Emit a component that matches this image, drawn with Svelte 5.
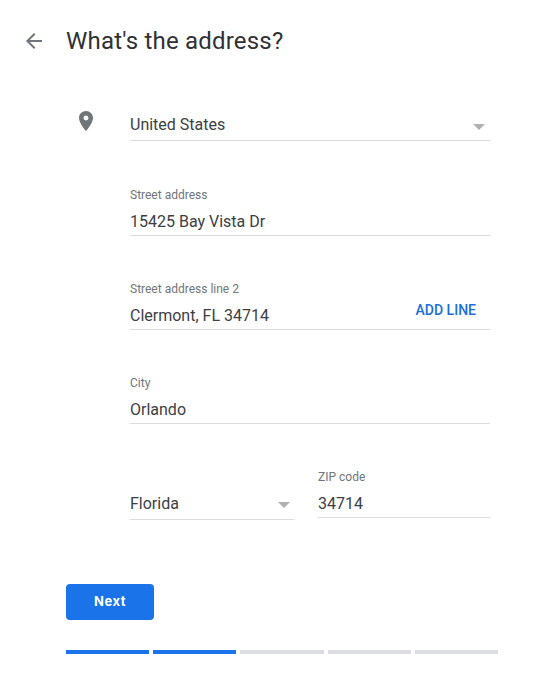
<script>
  const steps = [true, true, false, false, false]
</script>

<main class="page">
  <header class="head">
    <svg class="back" viewBox="0 0 24 24" width="24" height="24">
      <path d="M20 11H7.83l5.59-5.59L12 4l-8 8 8 8 1.41-1.41L7.83 13H20v-2z" />
    </svg>
    <h1>What's the address?</h1>
  </header>

  <form class="form">
    <svg class="pin" viewBox="0 0 24 24" width="24" height="24">
      <path d="M12 2C8.13 2 5 5.13 5 9c0 5.25 7 13 7 13s7-7.75 7-13c0-3.87-3.13-7-7-7zm0 9.5a2.5 2.5 0 0 1 0-5 2.5 2.5 0 0 1 0 5z" />
    </svg>

    <div class="fields">
      <div class="field select country">
        <span class="value">United States</span>
        <span class="caret"></span>
      </div>

      <div class="field">
        <span class="label">Street address</span>
        <span class="value">15425 Bay Vista Dr</span>
      </div>

      <div class="field">
        <span class="label">Street address line 2</span>
        <div class="line2">
          <span class="value">Clermont, FL 34714</span>
          <span class="add">ADD LINE</span>
        </div>
      </div>

      <div class="field">
        <span class="label">City</span>
        <span class="value">Orlando</span>
      </div>

      <div class="split">
        <div class="field select state">
          <span class="value">Florida</span>
          <span class="caret"></span>
        </div>
        <div class="field zip">
          <span class="label">ZIP code</span>
          <span class="value">34714</span>
        </div>
      </div>
    </div>
  </form>

  <button class="next" type="button">Next</button>

  <div class="progress">
    {#each steps as done}
      <span class="step" class:done></span>
    {/each}
  </div>
</main>

<style>
  :global(body) {
    margin: 0;
    background: #fff;
  }

  .page {
    width: 546px;
    height: 682px;
    box-sizing: border-box;
    padding: 25px 48px 0 22px;
    font-family: Roboto, "Liberation Sans", sans-serif;
    color: #3c4043;
    overflow: hidden;
  }

  .head {
    display: flex;
    align-items: center;
    gap: 20px;
    height: 32px;
  }

  .back {
    fill: #70757a;
    flex: none;
  }

  h1 {
    margin: 0;
    font-size: 24px;
    font-weight: 400;
    line-height: 32px;
    letter-spacing: 0.2px;
    color: #303134;
  }

  .form {
    display: flex;
    margin: 52px 0 0 44px;
  }

  .pin {
    fill: #70757a;
    flex: none;
    margin: 0 32px 0 8px;
  }

  .fields {
    width: 360px;
    display: flex;
    flex-direction: column;
  }

  .field {
    display: flex;
    flex-direction: column;
    border-bottom: 1px solid #dadce0;
    padding-bottom: 1px;
    margin-top: 45px;
    position: relative;
  }

  .country {
    margin: 0 0 1px;
    padding: 4px 0 3px;
  }

  .label {
    font-size: 12px;
    line-height: 16px;
    color: #70757a;
    margin-bottom: 7px;
  }

  .value {
    font-size: 16px;
    line-height: 24px;
    color: #3c4043;
  }

  .line2 {
    display: flex;
    justify-content: space-between;
    align-items: center;
  }

  .add {
    font-size: 14px;
    font-weight: 500;
    color: #1a6fdc;
    margin: -13px 14px 0 0;
  }

  .caret {
    position: absolute;
    right: 5px;
    top: 15px;
    border-left: 6px solid transparent;
    border-right: 6px solid transparent;
    border-top: 6px solid #b0b0b0;
  }

  .split {
    display: flex;
    gap: 24px;
    align-items: flex-start;
  }

  .state {
    width: 164px;
    margin-top: 68px;
    padding-bottom: 3px;
  }

  .state .caret {
    top: 10px;
    right: 4px;
  }

  .zip {
    flex: 1;
  }

  .next {
    display: block;
    width: 88px;
    height: 36px;
    margin: 64px 0 0 44px;
    border: 0;
    border-radius: 4px;
    background: #1a73e8;
    color: #fff;
    font-family: Inter, Roboto, sans-serif;
    font-size: 13px;
    font-weight: 700;
    letter-spacing: 0.5px;
    padding: 0 0 2px;
  }

  .progress {
    display: flex;
    gap: 4px;
    margin: 30px 0 0 44px;
    width: 432px;
  }

  .step {
    flex: 1;
    height: 4px;
    background: #dadce0;
  }

  .step.done {
    background: #1a73e8;
  }
</style>
